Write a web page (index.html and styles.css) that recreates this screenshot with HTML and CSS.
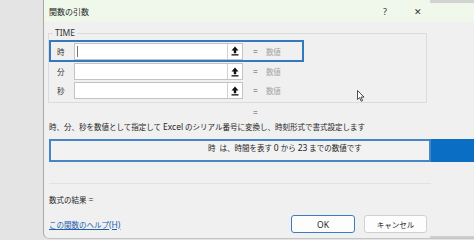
FILE: index.html
```html
<!DOCTYPE html>
<html lang="ja">
<head>
    <meta charset="UTF-8">
    <title>関数の引数</title>
    <link rel="stylesheet" href="styles.css">
</head>
<body>
    <div class="screen">
        <div class="desk"></div>

        <div class="dialog">
            <!-- Title bar -->
            <div class="titlebar">
                <span class="title">関数の引数</span>
                <span class="title-btn">?</span>
                <span class="title-btn close">✕</span>
            </div>

            <div class="main">
                <fieldset class="group">
                    <legend>TIME</legend>

                    <div class="row active">
                        <span class="arg-label">時</span>
                        <div class="field">
                            <span class="caret"></span>
                            <span class="collapse">
                                <svg width="8" height="10" viewBox="0 0 8 10"><path d="M4 0.5 L7.5 4.5 H5.2 V7.2 H2.8 V4.5 H0.5 Z" fill="#111"/><rect x="0.5" y="8.2" width="7" height="1.3" fill="#111"/></svg>
                            </span>
                        </div>
                        <span class="eq">=</span>
                        <span class="hint">数値</span>
                    </div>

                    <div class="row">
                        <span class="arg-label">分</span>
                        <div class="field">
                            <span class="collapse">
                                <svg width="8" height="10" viewBox="0 0 8 10"><path d="M4 0.5 L7.5 4.5 H5.2 V7.2 H2.8 V4.5 H0.5 Z" fill="#111"/><rect x="0.5" y="8.2" width="7" height="1.3" fill="#111"/></svg>
                            </span>
                        </div>
                        <span class="eq">=</span>
                        <span class="hint">数値</span>
                    </div>

                    <div class="row">
                        <span class="arg-label">秒</span>
                        <div class="field">
                            <span class="collapse">
                                <svg width="8" height="10" viewBox="0 0 8 10"><path d="M4 0.5 L7.5 4.5 H5.2 V7.2 H2.8 V4.5 H0.5 Z" fill="#111"/><rect x="0.5" y="8.2" width="7" height="1.3" fill="#111"/></svg>
                            </span>
                        </div>
                        <span class="eq">=</span>
                        <span class="hint">数値</span>
                    </div>
                </fieldset>

                <div class="func-eq">=</div>
                <div class="summary">時、分、秒を数値として指定して <span class="lat">Excel</span> のシリアル番号に変換し、時刻形式で書式設定します</div>
            </div>

            <div class="desc-row">
                <div class="desc">時&nbsp; は、時間を表す <span class="lat">0</span> から <span class="lat">23</span> までの数値です</div>
                <div class="desc-fill"></div>
            </div>

            <div class="main">
                <div class="sep"></div>
                <div class="result">数式の結果 <span class="lat">=</span></div>
                <div class="footer">
                    <a class="help" href="#">この関数のヘルプ<span class="lat">(H)</span></a>
                    <button class="btn default">OK</button>
                    <button class="btn">キャンセル</button>
                </div>
            </div>
        </div>

        <!-- mouse pointer -->
        <svg class="pointer" width="8" height="12" viewBox="0 0 8 12">
            <path d="M0.5 0.5 V9.5 L2.6 7.6 L4.2 11.2 L5.6 10.6 L4 7.1 H7 Z" fill="#fff" stroke="#222" stroke-width="0.8" stroke-linejoin="round"/>
        </svg>
    </div>
</body>
</html>
```

FILE: styles.css
```css
body {
    margin: 0;
    width: 474px;
    height: 240px;
    overflow: hidden;
    background: #e4e4e4;
    font-family: "Noto Sans", "Noto Sans CJK JP", sans-serif;
    font-size: 7.5px;
    color: #1e1e1e;
}
.lat {
    font-size: 8.5px;
}
.screen {
    position: relative;
    display: flex;
    height: 240px;
}
.desk {
    width: 43px;
    background: #e4e4e4;
}

/* Dialog */
.dialog {
    flex: 1;
    height: 238px;
    border-left: 1px solid #a8a8a8;
    border-bottom: 1px solid #c4c4c4;
    border-bottom-left-radius: 6px;
    background: linear-gradient(#cdcdcd, #cdcdcd) right bottom / 44px 2px no-repeat, #f0f0f0;
    display: flex;
    flex-direction: column;
}
.titlebar {
    height: 22px;
    display: flex;
    align-items: center;
    padding: 0 41px 0 5px;
    background: linear-gradient(#d3d3d3, #d3d3d3) right top / 44px 3px no-repeat, #eff8eb;
}
.title {
    font-size: 8px;
    flex: 1;
}
.title-btn {
    width: 30px;
    text-align: center;
    font-size: 9px;
    color: #333;
}
.title-btn.close {
    margin-left: 3px;
}
.main {
    padding-left: 4px;
    width: 379px;
}

/* Argument group */
.group {
    margin: 6px 0 0 0;
    padding: 2px 0 2px 0;
    border: 1px solid #dcdcdc;
    min-width: 0;
}
.group legend {
    margin-left: 4px;
    padding: 0 2px;
    line-height: 10px;
    font-size: 8.5px;
    color: #333;
}
.row {
    box-sizing: border-box;
    width: 255px;
    height: 19px;
    padding-left: 8px;
    display: flex;
    align-items: center;
}
.row.active {
    height: 22px;
    padding-left: 6px;
    border: 2px solid #3479bf;
}
.arg-label {
    width: 17px;
    color: #333;
}
.field {
    box-sizing: border-box;
    width: 169px;
    height: 17px;
    background: #fff;
    border: 1px solid #c3c3c3;
    display: flex;
    align-items: center;
}
.caret {
    width: 1px;
    height: 11px;
    margin-left: 2px;
    background: #777;
}
.collapse {
    margin-left: auto;
    width: 14px;
    height: 15px;
    border-left: 1px solid #d2d2d2;
    display: flex;
    align-items: center;
    justify-content: center;
}
.eq {
    margin-left: 10px;
    font-size: 8.5px;
    color: #555;
}
.hint {
    margin-left: 8px;
    color: #a3a3a3;
}

.func-eq {
    margin-top: 5px;
    padding-left: 205px;
    line-height: 10px;
    font-size: 8.5px;
    color: #555;
}
.summary {
    margin-top: 4px;
    padding-left: 1px;
    line-height: 10px;
    white-space: nowrap;
}

/* Description of the active argument */
.desc-row {
    display: flex;
    margin-top: 7px;
    height: 23px;
}
.desc {
    box-sizing: border-box;
    width: 382px;
    margin-left: 5px;
    border: 2px solid #4686c6;
    padding: 2px 0 0 157px;
    line-height: 10px;
    background: #f2f2f2;
    white-space: nowrap;
}
.desc-fill {
    flex: 1;
    background: #0a6ec4;
}

.sep {
    margin: 21px 0 0 1px;
    width: 382px;
    height: 1px;
    background: #e2e2e2;
}
.result {
    margin-top: 11px;
    padding-left: 1px;
    line-height: 10px;
}
.footer {
    margin-top: 10px;
    display: flex;
    align-items: center;
    height: 18px;
}
.help {
    margin-left: 1px;
    color: #1e5fb0;
    flex: 1;
}
.btn {
    box-sizing: border-box;
    height: 18px;
    width: 63px;
    margin-left: 9px;
    padding: 0;
    font-family: inherit;
    font-size: 7.5px;
    color: #1e1e1e;
    background: #fdfdfd;
    border: 1px solid #d0d0d0;
    border-radius: 3px;
}
.btn.default {
    width: 64px;
    border-color: #3b7dc4;
    font-size: 8.5px;
}

.pointer {
    position: absolute;
    left: 357px;
    top: 90px;
}
```
